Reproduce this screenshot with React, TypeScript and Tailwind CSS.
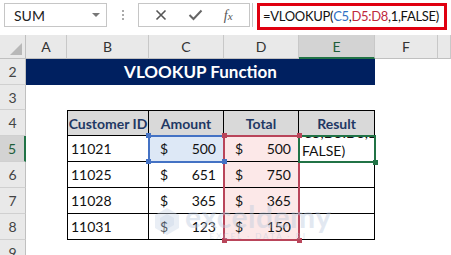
import React from "react";

const font = "font-['Lato','Open_Sans',sans-serif]";

type Row = { id: string; amount: string; total: string };

const rows: Row[] = [
  { id: "11021", amount: "500", total: "500" },
  { id: "11025", amount: "651", total: "750" },
  { id: "11028", amount: "365", total: "365" },
  { id: "11031", amount: "123", total: "150" },
];

function ColHead({ label, active }: { label: string; active?: boolean }) {
  return (
    <div
      className={`flex items-center justify-center border-r border-[#c8c8c8] text-[14px] ${
        active ? "bg-[#d3d3d3] text-[#1e5e3a] border-b-2 border-b-[#217346]" : "bg-[#e9e9e9] text-[#333] border-b border-b-[#c0c0c0]"
      }`}
    >
      {label}
    </div>
  );
}

function RowHead({ n, active }: { n: number; active?: boolean }) {
  return (
    <div
      className={`flex items-center justify-center border-b border-[#d0d0d0] text-[14px] ${
        active ? "bg-[#d3d3d3] text-[#1e5e3a] border-r-2 border-r-[#217346]" : "bg-[#e9e9e9] text-[#444] border-r border-r-[#c0c0c0]"
      }`}
    >
      {n}
    </div>
  );
}

function Money({ v, bg }: { v: string; bg?: string }) {
  return (
    <div className={`flex items-center justify-between px-[11px] border-r border-b border-black ${bg ?? ""}`}>
      <span>$</span>
      <span className="-mr-[4px]">{v}</span>
    </div>
  );
}

export default function App() {
  return (
    <div className={`relative w-[451px] h-[255px] overflow-hidden bg-white ${font}`}>
      {/* formula bar */}
      <div className="flex items-start h-[35px] pt-[3px] bg-white">
        <div className="ml-[4px] w-[103px] h-[24px] border border-[#c6c6c6] flex items-center justify-between pl-[9px] pr-[6px] text-[14px] text-[#222]">
          <span>SUM</span>
          <span className="w-0 h-0 border-l-[4px] border-r-[4px] border-t-[4px] border-l-transparent border-r-transparent border-t-[#777]" />
        </div>
        <div className="w-[31px] h-[24px] flex flex-col items-center justify-center gap-[2px]">
          <span className="w-[2px] h-[2px] bg-[#aaa]" />
          <span className="w-[2px] h-[2px] bg-[#aaa]" />
          <span className="w-[2px] h-[2px] bg-[#aaa]" />
        </div>
        <div className="w-[112px] h-[24px] border border-[#c6c6c6] flex items-center justify-around px-[6px] text-[#555]">
          <svg width="12" height="12" viewBox="0 0 12 12">
            <path d="M1.5 1.5 L10.5 10.5 M10.5 1.5 L1.5 10.5" stroke="#555" strokeWidth="1.6" />
          </svg>
          <svg width="15" height="12" viewBox="0 0 15 12">
            <path d="M1.5 6 L5.5 10 L13.5 1.5" stroke="#666" strokeWidth="2" fill="none" />
          </svg>
          <span className="italic text-[14px] font-['Liberation_Serif',serif] text-[#555]">
            f<span className="text-[11px]">x</span>
          </span>
        </div>
        <div className="ml-[2px] w-[3px] h-[24px] border-l border-[#c6c6c6]" />
        <div className="ml-[2px] w-[190px] h-[27px] border-[3px] border-[#e00010] flex items-center pl-[3px] text-[13px] tracking-[-0.3px] text-[#111] whitespace-nowrap overflow-hidden">
          =VLOOKUP(<span className="text-[#2f6fc4]">C5</span>,<span className="text-[#c0283c]">D5:D8</span>,1,FALSE)
        </div>
      </div>

      {/* sheet */}
      <div className="relative grid grid-cols-[26px_41px_82px_75px_75px_76px_63px_1fr] grid-rows-[24px_26px_25px_26px_26px_26px_26px_26px_26px] text-[14px] text-[#111]">
        {/* header row */}
        <div className="relative bg-[#e9e9e9] border-r border-b border-[#c0c0c0]">
          <span className="absolute right-[3px] bottom-[3px] w-0 h-0 [border-bottom:12px_solid_#b8b8b8] [border-left:12px_solid_transparent]" />
        </div>
        <ColHead label="A" />
        <ColHead label="B" />
        <ColHead label="C" />
        <ColHead label="D" />
        <ColHead label="E" active />
        <ColHead label="F" />
        <ColHead label="" />

        {/* row 2 */}
        <RowHead n={2} />
        <div className="col-span-5 bg-[#002060] text-white font-bold text-[17px] flex items-center justify-center">
          VLOOKUP Function
        </div>
        <div />
        <div />

        {/* row 3 */}
        <RowHead n={3} />
        <div className="col-span-7" />

        {/* row 4 */}
        <RowHead n={4} />
        <div />
        {["Customer ID", "Amount", "Total", "Result"].map((h, i) => (
          <div
            key={h}
            className={`flex items-center justify-center bg-[#d9d9d9] font-bold text-[#1f3864] border-t border-r border-b border-black ${
              i === 0 ? "border-l" : ""
            }`}
          >
            {h}
          </div>
        ))}
        <div />
        <div />

        {/* data rows */}
        {rows.map((r, i) => (
          <React.Fragment key={r.id}>
            <RowHead n={5 + i} active={i === 0} />
            <div />
            <div className="flex items-center pl-[3px] border-l border-r border-b border-black">{r.id}</div>
            <Money v={r.amount} bg={i === 0 ? "bg-[#dde8f6]" : ""} />
            <Money v={r.total} bg="bg-[#fce8e8]" />
            <div className="relative flex items-center pl-[3px] border-r border-b border-black overflow-hidden">
              {i === 0 && (
                <>
                  <span className="absolute left-[4px] -top-[14px] text-[14px] whitespace-nowrap">C5,D5:D8,1,</span>
                  <span className="mt-[4px]">FALSE)</span>
                </>
              )}
            </div>
            <div />
            <div />
          </React.Fragment>
        ))}

        {/* row 9 */}
        <RowHead n={9} />
        <div className="col-span-7" />

        {/* selection overlays */}
        <div className="absolute left-[148px] top-[100px] w-[77px] h-[28px] border-2 border-[#4472c4] pointer-events-none" />
        <div className="absolute left-[223px] top-[100px] w-[77px] h-[106px] border-2 border-[#b9455a] pointer-events-none" />
        <div className="absolute left-[298px] top-[100px] w-[78px] h-[28px] border-2 border-[#217346] pointer-events-none" />
        <span className="absolute left-[146px] top-[98px] w-[5px] h-[5px] bg-[#4472c4]" />
        <span className="absolute left-[146px] top-[124px] w-[5px] h-[5px] bg-[#4472c4]" />
        <span className="absolute left-[222px] top-[124px] w-[5px] h-[5px] bg-[#4472c4]" />
        <span className="absolute left-[222px] top-[98px] w-[5px] h-[5px] bg-[#b9455a]" />
        <span className="absolute left-[297px] top-[98px] w-[5px] h-[5px] bg-[#b9455a]" />
        <span className="absolute left-[222px] top-[203px] w-[5px] h-[5px] bg-[#b9455a]" />
        <span className="absolute left-[297px] top-[203px] w-[5px] h-[5px] bg-[#b9455a]" />
        <span className="absolute left-[373px] top-[125px] w-[5px] h-[5px] bg-[#217346]" />

        {/* watermark */}
        <div className="absolute left-[152px] top-[166px] flex items-center gap-[3px] opacity-40 pointer-events-none">
          <svg width="30" height="30" viewBox="0 0 30 30">
            <path d="M15 2 L27 9 L27 22 L15 29 L3 22 L3 9 Z" fill="#c9d6e8" />
            <path d="M15 8 L22 12 L22 19 L15 23 L8 19 L8 12 Z" fill="#a9bcd8" />
          </svg>
          <div className="flex flex-col items-center leading-none">
            <span className="text-[30px] font-bold text-[#b8c8de] tracking-[0.5px]">exceldemy</span>
            <span className="text-[8px] text-[#b8c8de] tracking-[2px] mt-[1px]">EXCEL · DATA · BI</span>
          </div>
        </div>
      </div>
    </div>
  );
}
